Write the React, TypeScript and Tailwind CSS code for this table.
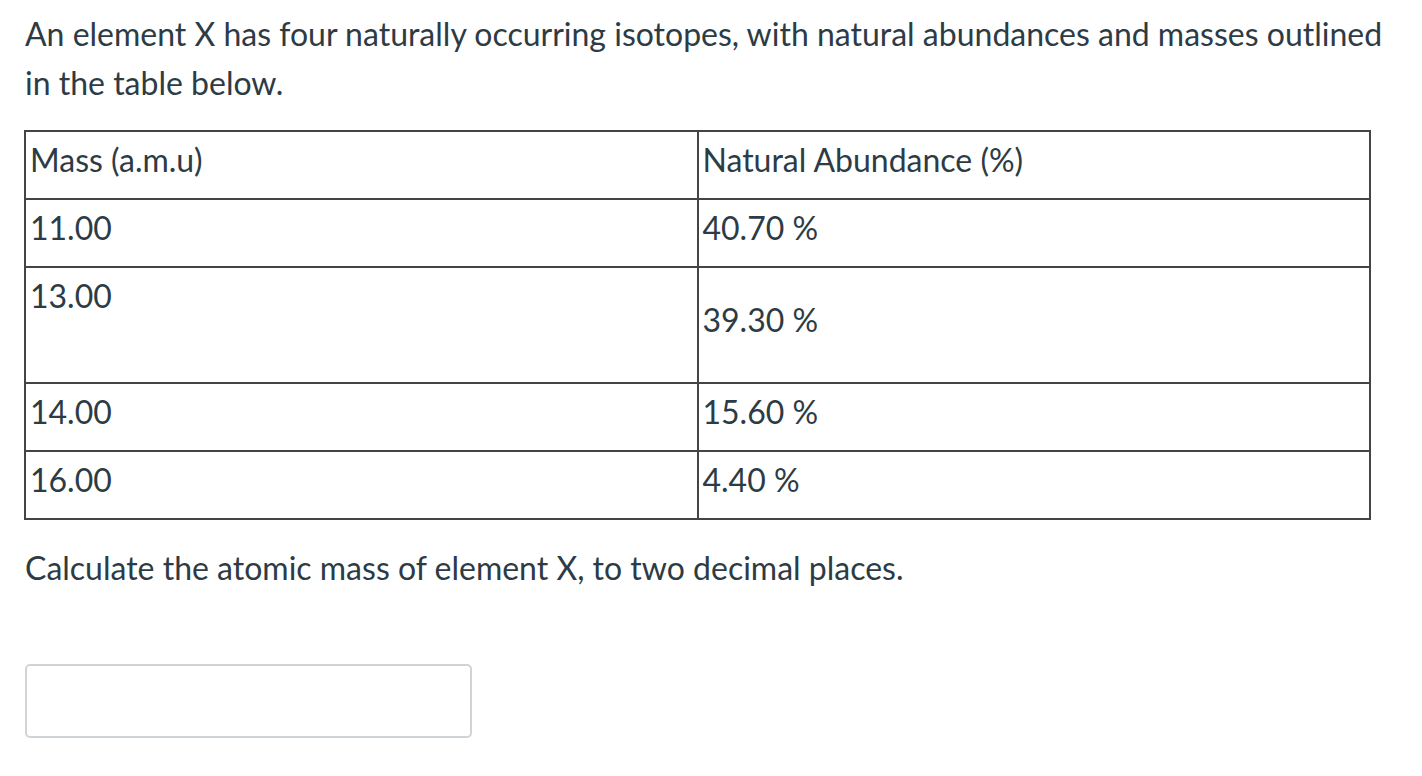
import { useState } from "react";

const rows: { mass: string; abundance: string; tall?: boolean }[] = [
  { mass: "11.00", abundance: "40.70 %" },
  { mass: "13.00", abundance: "39.30 %", tall: true },
  { mass: "14.00", abundance: "15.60 %" },
  { mass: "16.00", abundance: "4.40 %" },
];

export default function App() {
  const [answer, setAnswer] = useState("");

  return (
    <div
      className="min-h-screen bg-white pl-[25px] pr-[30px] pt-[9px] text-[#2d3b45] text-[32px] leading-[49px]"
      style={{ fontFamily: "Lato, 'Noto Sans', sans-serif" }}
    >
      <p>
        An element X has four naturally occurring isotopes, with natural abundances and masses outlined in the
        table below.
      </p>

      <table className="mt-[23px] w-[1347px] -ml-px border-collapse border-2 border-[#444]">
        <tbody>
          <tr className="h-[68px]">
            <td className="w-1/2 border-2 border-[#444] px-[4px] pb-[11px] align-middle">Mass (a.m.u)</td>
            <td className="w-1/2 border-2 border-[#444] px-[4px] pb-[11px] align-middle">Natural Abundance (%)</td>
          </tr>
          {rows.map((r) => (
            <tr key={r.mass} className={r.tall ? "h-[116px]" : "h-[68px]"}>
              <td
                className={`border-2 border-[#444] px-[4px] ${r.tall ? "align-top pt-[3px]" : "align-middle pb-[11px]"}`}
              >
                {r.mass}
              </td>
              <td className="border-2 border-[#444] px-[4px] pb-[11px] align-middle">{r.abundance}</td>
            </tr>
          ))}
        </tbody>
      </table>

      <p className="mt-[23px]">Calculate the atomic mass of element X, to two decimal places.</p>

      <input
        type="text"
        value={answer}
        onChange={(e) => setAnswer(e.target.value)}
        className="mt-[72px] block h-[74px] w-[447px] rounded-[5px] border-2 border-[#cfd4d8] bg-white px-3 outline-none"
      />
    </div>
  );
}
